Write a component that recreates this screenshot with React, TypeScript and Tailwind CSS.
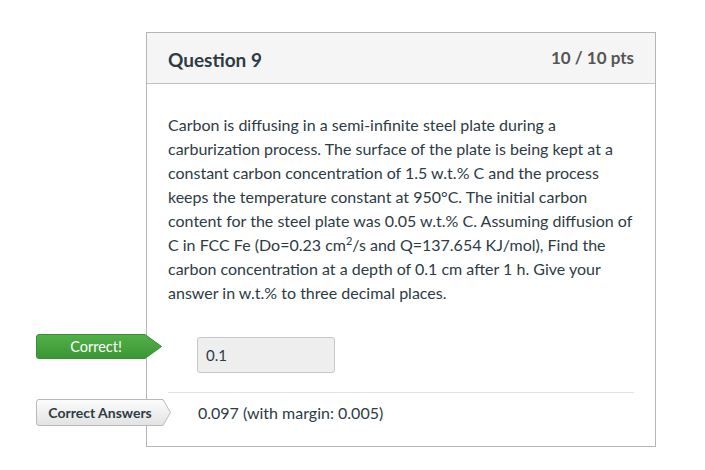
import React from 'react';

const Tag = ({ width, height, arrow, from, to, stroke, children, className }: { width: number, height: number, arrow: number, from: string, to: string, stroke: string, children: React.ReactNode, className: string }) => {
    const id = `g${from.slice(1)}`;
    return (
        <div className={`absolute flex items-center justify-center ${className}`} style={{ width: width + arrow, height }}>
            <svg className="absolute inset-0" width={width + arrow} height={height}>
                <defs>
                    <linearGradient id={id} x1="0" y1="0" x2="0" y2="1">
                        <stop offset="0" stopColor={from} />
                        <stop offset="1" stopColor={to} />
                    </linearGradient>
                </defs>
                <path
                    d={`M3 0.5 H${width} L${width + arrow - 0.5} ${height / 2} L${width} ${height - 0.5} H3 Q0.5 ${height - 0.5} 0.5 ${height - 3} V3 Q0.5 0.5 3 0.5 Z`}
                    fill={`url(#${id})`}
                    stroke={stroke}
                    strokeWidth="1"
                />
            </svg>
            <span className="relative">{children}</span>
        </div>
    );
};

const App = () => {
    return (
        <div className="w-[705px] h-[470px] bg-white overflow-hidden font-['Lato','Liberation_Sans',sans-serif] text-[#2d3b45]">
            <div className="ml-[146px] mt-[32px] w-[510px] border border-[#b5b5b5]">
                {/* Header */}
                <div className="h-[51px] bg-[#f5f5f5] border-b border-[#c4c4c4] flex items-center justify-between px-[21px]">
                    <h2 className="text-[19px] font-bold pt-[5px]">Question 9</h2>
                    <span className="text-[17px] font-bold text-[#555]">10 / 10 pts</span>
                </div>

                {/* Body */}
                <div className="px-[21px] pt-[29px] pb-[20px]">
                    <p className="text-[16px] leading-[24px] w-[472px]">
                        Carbon is diffusing in a semi-infinite steel plate during a carburization process. The surface of the plate is being kept at a constant carbon concentration of 1.5 w.t.% C and the process keeps the temperature constant at 950°C. The initial carbon content for the steel plate was 0.05 w.t.% C. Assuming diffusion of C in FCC Fe (Do=0.23 cm<sup className="text-[11px] leading-none relative top-[-6px] align-baseline">2</sup>/s and Q=137.654 KJ/mol), Find the carbon concentration at a depth of 0.1 cm after 1 h. Give your answer in w.t.% to three decimal places.
                    </p>

                    {/* Given answer */}
                    <div className="relative mt-[32px] pl-[29px]">
                        <Tag width={109} height={25} arrow={17} from="#52b04a" to="#3a9633" stroke="#3a8f33" className="left-[-132px] top-[-3px] text-white text-[14.5px]">
                            <span className="pr-[6px]">Correct!</span>
                        </Tag>
                        <div className="w-[138px] h-[36px] bg-[#eeeeee] border border-[#c8c8c8] rounded-[3px] flex items-center px-[8px] text-[15px]">
                            0.1
                        </div>
                    </div>

                    <div className="mt-[19px] border-t border-[#e2e2e2]"></div>

                    {/* Correct answer */}
                    <div className="relative mt-[6px] h-[27px] flex items-center pl-[30px]">
                        <Tag width={127} height={27} arrow={8} from="#fdfdfd" to="#e2e2e2" stroke="#b9b9b9" className="left-[-132px] top-0 text-[14px] font-bold text-[#2d3b45]">
                            <span className="pr-[7px]">Correct Answers</span>
                        </Tag>
                        <span className="text-[16px]">0.097 (with margin: 0.005)</span>
                    </div>
                </div>
            </div>
        </div>
    );
};

export default App;
